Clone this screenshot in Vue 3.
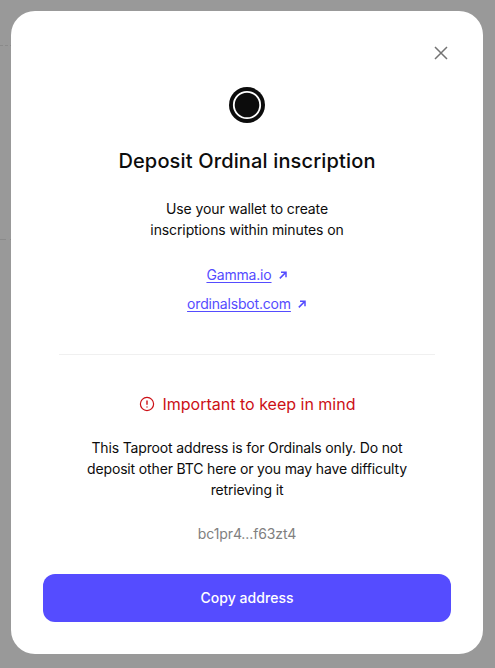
<script setup>
const links = ['Gamma.io', 'ordinalsbot.com']
</script>

<template>
  <div class="page">
    <i class="dash dash-a"></i>
    <i class="dash dash-b"></i>
    <section class="modal">
      <button class="close" aria-label="Close">
        <svg width="14" height="14" viewBox="0 0 14 14" fill="none" stroke="#737373" stroke-width="1.5">
          <path d="M1 1l12 12M13 1L1 13" />
        </svg>
      </button>
      <svg class="logo" width="36" height="36" viewBox="0 0 36 36">
        <circle cx="18" cy="18" r="18" fill="#0c0c0c" />
        <circle cx="18" cy="18" r="13.2" fill="#0c0c0c" stroke="#fff" stroke-width="1.8" />
      </svg>
      <h1>Deposit Ordinal inscription</h1>
      <p class="intro">Use your wallet to create<br />inscriptions within minutes on</p>
      <div class="links">
        <a v-for="link in links" :key="link" class="link">
          <span>{{ link }}</span>
          <svg width="10" height="10" viewBox="0 0 10 10" fill="none" stroke="#554cff" stroke-width="1.5">
            <path d="M1.8 8.4L7.8 2.4M3 2.2h5v5" />
          </svg>
        </a>
      </div>
      <hr />
      <div class="warn">
        <svg width="16" height="16" viewBox="0 0 16 16" fill="none" stroke="#cc1016" stroke-width="1.2">
          <circle cx="8" cy="8" r="6.6" />
          <path d="M8 4.6v4.2M8 10.4v1.2" stroke-width="1.4" />
        </svg>
        <span>Important to keep in mind</span>
      </div>
      <p class="note">This Taproot address is for Ordinals only. Do not deposit other BTC here or you may have difficulty retrieving it</p>
      <p class="addr">bc1pr4...f63zt4</p>
      <button class="copy">Copy address</button>
    </section>
  </div>
</template>

<style>
html, body { margin: 0; background: #999; }
</style>

<style scoped>
.page {
  position: relative;
  height: 668px;
  padding: 11px 12px 14px 11px;
  box-sizing: border-box;
  background: #999;
  font-family: Inter, "Liberation Sans", sans-serif;
  overflow: hidden;
}
.dash { position: absolute; left: 0; width: 11px; height: 1px; }
.dash-a { top: 45px; background: repeating-linear-gradient(90deg, #8a8a8a 0 3px, transparent 3px 5px); }
.dash-b { top: 239px; background: repeating-linear-gradient(90deg, #8a8a8a 0 6px, transparent 6px 10px); }
.modal {
  position: relative;
  height: 643px;
  box-sizing: border-box;
  padding: 75px 32px 32px;
  background: #fff;
  border-radius: 24px;
  display: flex;
  flex-direction: column;
  align-items: center;
  color: #0c0c0c;
}
.close {
  position: absolute;
  top: 35px;
  right: 35px;
  width: 14px;
  height: 14px;
  padding: 0;
  border: 0;
  background: none;
  display: flex;
}
.logo { display: block; margin-top: 1px; }
h1 {
  margin: 24px 0 0;
  font-size: 20px;
  line-height: 28px;
  font-weight: 500;
  letter-spacing: 0.15px;
}
.intro {
  margin: 23px 0 0;
  font-size: 14px;
  line-height: 21px;
  letter-spacing: -0.11px;
  text-align: center;
}
.links {
  margin-top: 24px;
  display: flex;
  flex-direction: column;
  align-items: center;
  gap: 8px;
}
.link {
  display: flex;
  align-items: center;
  gap: 6px;
  font-size: 14px;
  line-height: 21px;
  letter-spacing: -0.18px;
  color: #554cff;
}
.link span { text-decoration: underline; text-underline-offset: 2px; }
hr {
  width: 376px;
  margin: 40px 0 0;
  border: 0;
  border-top: 1px solid #f0f0f0;
}
.warn {
  margin-top: 37px;
  display: flex;
  align-items: center;
  gap: 8px;
  color: #cc1016;
  font-size: 16px;
  line-height: 24px;
}
.note {
  width: 340px;
  margin: 21px 0 0;
  font-size: 14px;
  line-height: 21px;
  letter-spacing: -0.15px;
  text-align: center;
}
.addr {
  margin: 23px 0 0;
  font-size: 14px;
  line-height: 21px;
  letter-spacing: -0.1px;
  color: #808080;
}
.copy {
  margin-top: auto;
  width: 100%;
  height: 48px;
  border: 0;
  border-radius: 12px;
  background: #554cff;
  color: #fff;
  font: 500 14px/20px Inter, "Liberation Sans", sans-serif;
  letter-spacing: 0.05px;
}
</style>
